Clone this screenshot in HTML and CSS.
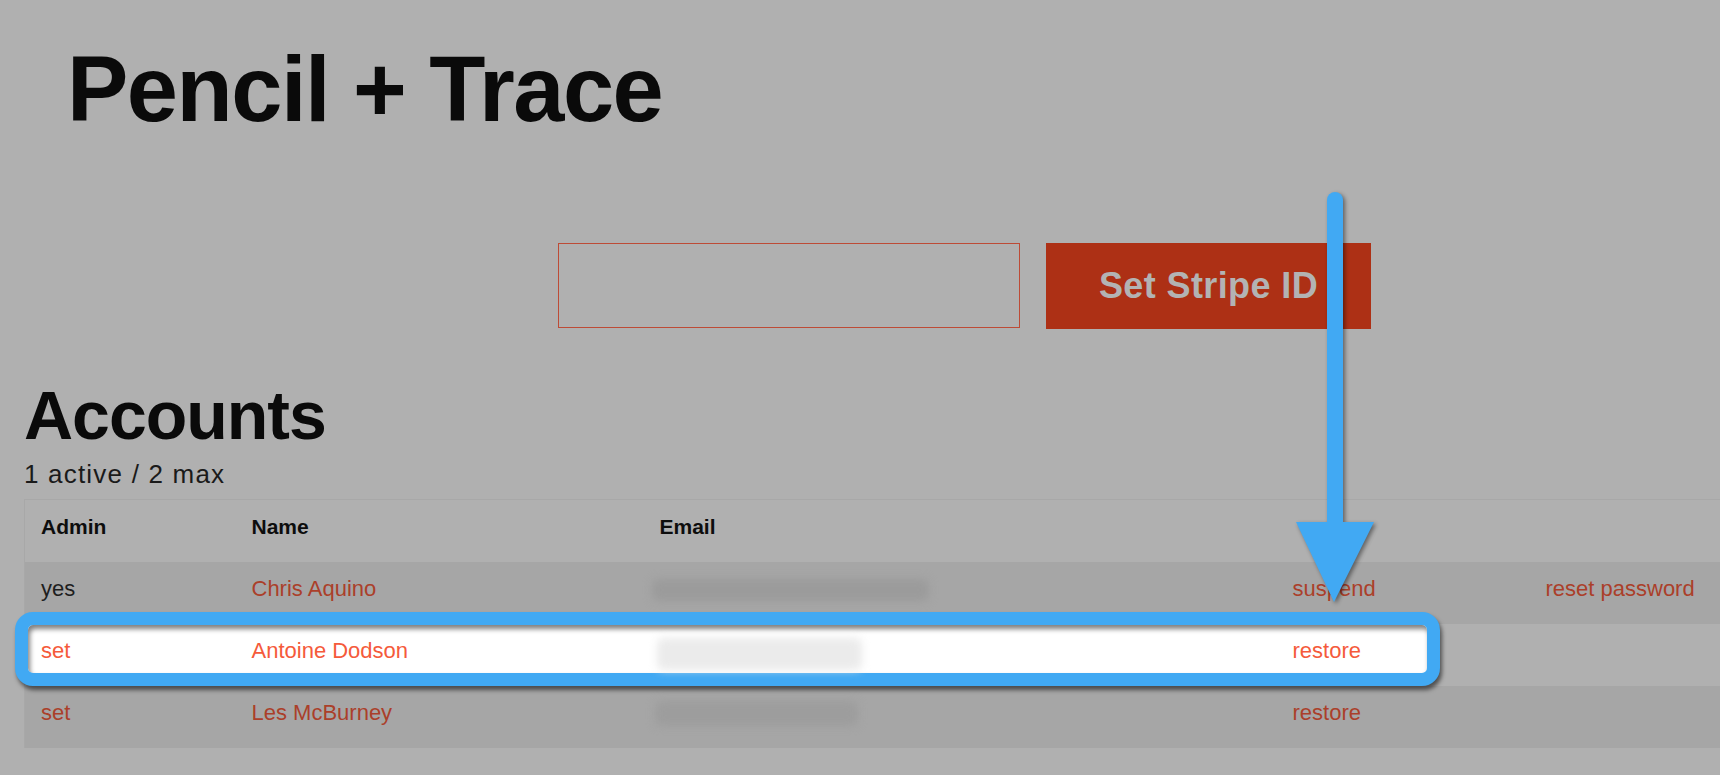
FILE: index.html
```html
<!DOCTYPE html>
<html lang="en">
<head>
    <meta charset="UTF-8">
    <meta name="viewport" content="width=device-width, initial-scale=1.0">
    <title>Accounts - Pencil + Trace</title>
    <link rel="stylesheet" href="styles.css">
</head>
<body>
    <div class="page">
        <header class="brand">
            <h1>Pencil + Trace</h1>
        </header>

        <form class="stripe-form" onsubmit="return false">
            <input type="text" class="stripe-input" aria-label="Stripe ID">
            <button type="submit" class="stripe-btn">Set Stripe ID</button>
        </form>

        <section class="accounts">
            <h2>Accounts</h2>
            <p class="seat-count">1 active / 2 max</p>

            <div class="table-wrap">
                <table class="accounts-table">
                    <colgroup>
                        <col class="col-admin">
                        <col class="col-name">
                        <col class="col-email">
                        <col class="col-status">
                        <col class="col-reset">
                    </colgroup>
                    <thead>
                        <tr>
                            <th>Admin</th>
                            <th>Name</th>
                            <th>Email</th>
                            <th></th>
                            <th></th>
                        </tr>
                    </thead>
                    <tbody>
                        <tr class="striped">
                            <td>yes</td>
                            <td><a href="#">Chris Aquino</a></td>
                            <td><span class="redact redact-1"></span></td>
                            <td><a href="#">suspend</a></td>
                            <td><a href="#">reset password</a></td>
                        </tr>
                        <tr class="is-focus">
                            <td><a href="#">set</a></td>
                            <td><a href="#">Antoine Dodson</a></td>
                            <td><span class="redact redact-2"></span></td>
                            <td><a href="#">restore</a></td>
                            <td></td>
                        </tr>
                        <tr class="striped">
                            <td><a href="#">set</a></td>
                            <td><a href="#">Les McBurney</a></td>
                            <td><span class="redact redact-3"></span></td>
                            <td><a href="#">restore</a></td>
                            <td></td>
                        </tr>
                    </tbody>
                </table>
                <!-- annotation: highlight around the suspended account -->
                <div class="callout"></div>
            </div>
        </section>

        <svg class="arrow" width="100" height="440" viewBox="0 0 100 440" aria-hidden="true">
            <line x1="45" y1="20" x2="45" y2="350" stroke="#41a9f3" stroke-width="16" stroke-linecap="round"/>
            <polygon points="6,342 84,342 44,422" fill="#41a9f3"/>
        </svg>
    </div>
</body>
</html>
```

FILE: styles.css
```css
body {
    margin: 0;
    background-color: #b0b0b0;
    font-family: "Liberation Sans", Arial, sans-serif;
    color: #111;
}
.page {
    position: relative;
    padding: 0 24px;
    min-height: 775px;
    overflow: hidden;
}
.brand h1 {
    margin: 0;
    padding: 43px 0 0 43px;
    font-size: 92px;
    line-height: 92px;
    font-weight: 700;
    letter-spacing: -1.5px;
    color: #0a0a0a;
}
.stripe-form {
    display: flex;
    align-items: flex-start;
    gap: 26px;
    margin-top: 108px;
    padding-left: 534px;
}
.stripe-input {
    width: 462px;
    height: 85px;
    box-sizing: border-box;
    border: 1px solid #bd4b36;
    background: transparent;
    margin: 0;
}
.stripe-btn {
    width: 325px;
    height: 86px;
    border: none;
    margin: 0;
    background-color: #ad3015;
    color: #b3b3b3;
    font-family: "Liberation Sans", Arial, sans-serif;
    font-size: 36px;
    font-weight: 700;
    letter-spacing: 0.4px;
    cursor: pointer;
}
.accounts h2 {
    margin: 52px 0 0;
    font-size: 68px;
    line-height: 68px;
    font-weight: 700;
    letter-spacing: -1px;
    color: #0a0a0a;
}
.seat-count {
    margin: 10px 0 0;
    font-size: 26px;
    line-height: 30px;
    letter-spacing: 1.2px;
    color: #1a1a1a;
}
.table-wrap {
    position: relative;
    margin-top: 10px;
}
.accounts-table {
    width: 1696px;
    table-layout: fixed;
    border-collapse: collapse;
    border-top: 1px solid #a8a8a8;
    border-left: 1px solid #a8a8a8;
}
.col-admin { width: 211px; }
.col-name { width: 408px; }
.col-email { width: 633px; }
.col-status { width: 253px; }
.col-reset { width: 191px; }
.accounts-table th,
.accounts-table td {
    padding: 14px 16px 22px;
    line-height: 26px;
    text-align: left;
    white-space: nowrap;
}
.accounts-table th {
    font-size: 21px;
    font-weight: 700;
    color: #0d0d0d;
}
.accounts-table td {
    font-size: 22px;
    color: #1e1e1e;
}
.accounts-table a {
    color: #ab3f2a;
    text-decoration: none;
}
.accounts-table tr.striped {
    background-color: #a6a6a6;
}
.is-focus td > * {
    position: relative;
    z-index: 1;
}
.is-focus a {
    color: #f55a3b;
}
.redact {
    display: block;
    border-radius: 6px;
    filter: blur(4px);
}
.redact-1 {
    width: 277px;
    height: 22px;
    margin: 3px 0 1px -8px;
    background-color: #9b9b9b;
}
.redact-2 {
    width: 205px;
    height: 32px;
    margin: 0 0 -6px -3px;
    background-color: #ebebeb;
}
.redact-3 {
    width: 203px;
    height: 25px;
    margin: 1px 0 0 -5px;
    background-color: #9d9d9d;
}
.callout {
    position: absolute;
    left: -9px;
    top: 113px;
    width: 1425px;
    height: 74px;
    box-sizing: border-box;
    border: 13px solid #41a9f3;
    border-radius: 18px;
    background-color: #fff;
    box-shadow: 2px 4px 4px rgba(0,0,0,0.55), inset 2px 4px 5px rgba(0,0,0,0.5);
    z-index: 0;
}
.arrow {
    position: absolute;
    left: 1290px;
    top: 180px;
    z-index: 2;
    filter: drop-shadow(2px 2px 2px rgba(0,0,0,0.45));
}
```
